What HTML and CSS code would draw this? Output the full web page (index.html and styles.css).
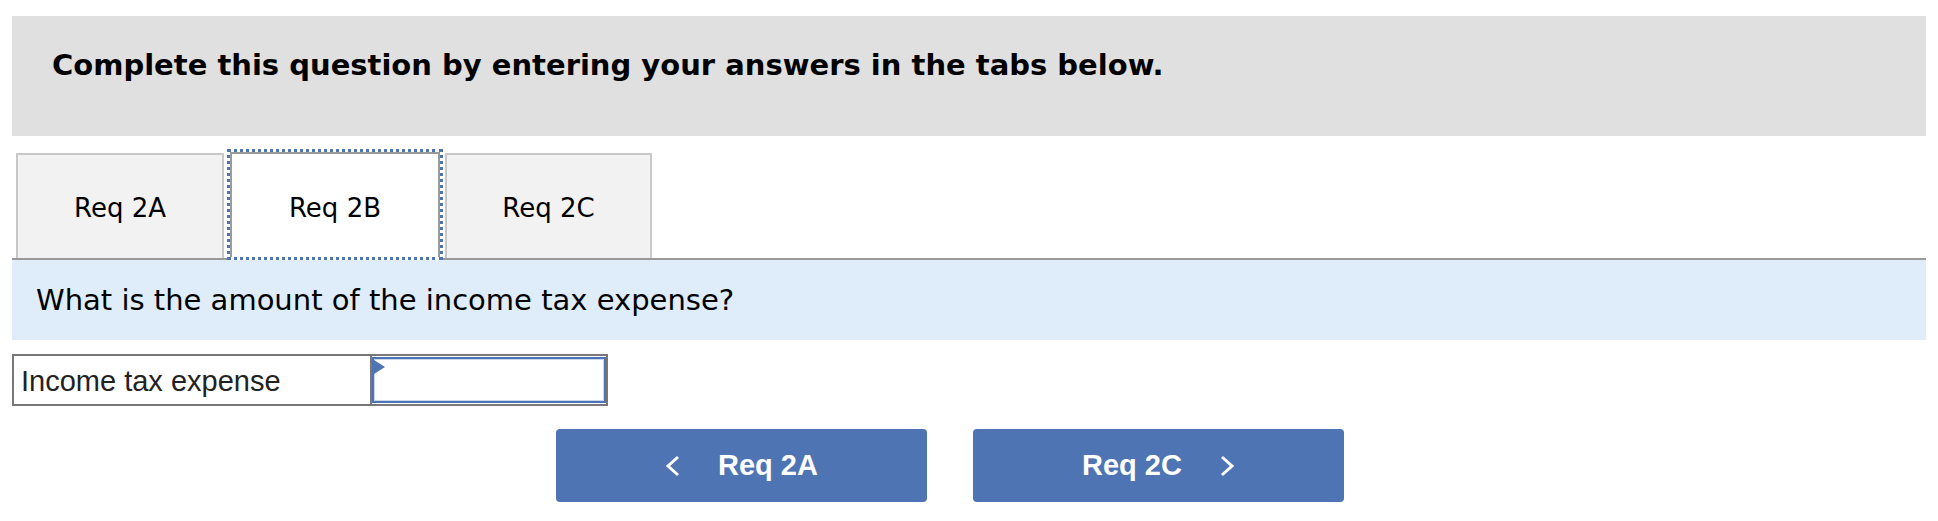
FILE: index.html
```html
<!DOCTYPE html>
<html lang="en">
<head>
<meta charset="utf-8">
<title>Req 2B</title>
<link rel="stylesheet" href="styles.css">
</head>
<body>
<div class="page">
  <div class="header">Complete this question by entering your answers in the tabs below.</div>
  <div class="tabs">
    <div class="tab tab-first">Req 2A</div>
    <div class="tab tab-active">Req 2B</div>
    <div class="tab tab-last">Req 2C</div>
  </div>
  <div class="question">What is the amount of the income tax expense?</div>
  <div class="answer-row">
    <div class="answer-label">Income tax expense</div>
    <div class="answer-cell">
      <div class="answer-input"></div>
    </div>
  </div>
  <div class="nav">
    <div class="nav-btn">
      <svg class="chev" width="15" height="22" viewBox="0 0 15 22"><polyline points="13,2 3,11 13,20" fill="none" stroke="#fff" stroke-width="3"/></svg>
      <span>Req 2A</span>
    </div>
    <div class="nav-btn">
      <span>Req 2C</span>
      <svg class="chev" width="15" height="22" viewBox="0 0 15 22"><polyline points="2,2 12,11 2,20" fill="none" stroke="#fff" stroke-width="3"/></svg>
    </div>
  </div>
</div>
</body>
</html>
```
FILE: styles.css
```css
html, body {
  margin: 0;
  padding: 0;
  background: #fff;
}
.page {
  padding: 16px 12px 0 12px;
  font-family: "DejaVu Sans", Verdana, sans-serif;
  color: #000;
}
.header {
  box-sizing: border-box;
  height: 120px;
  background: #e0e0e0;
  padding: 32px 0 0 40px;
  font-size: 29px;
  line-height: 34px;
  font-weight: bold;
}
.tabs {
  display: flex;
  align-items: flex-end;
  margin-top: 13px;
  padding-left: 4px;
  border-bottom: 2px solid #999;
}
.tab {
  box-sizing: border-box;
  display: flex;
  align-items: center;
  justify-content: center;
  font-size: 26px;
  line-height: 30px;
}
.tab-first, .tab-last {
  height: 105px;
  background: #f2f2f2;
  border: 2px solid #c8c8c8;
  border-bottom: 0;
  width: 208px;
  padding-top: 2px;
}
.tab-first {
  margin-right: 3px;
}
.tab-last {
  margin-left: 2px;
  width: 207px;
}
.tab-active {
  position: relative;
  z-index: 1;
  width: 216px;
  height: 111px;
  margin-bottom: -2px;
  background: #fff;
  border: 3px dotted #4f74b3;
  box-shadow: inset 2px 2px 0 #9a9a9a, inset -2px 0 0 #9a9a9a;
  padding-top: 6px;
}
.question {
  box-sizing: border-box;
  height: 80px;
  background: #dfecf9;
  padding: 23px 0 0 24px;
  font-size: 29px;
  line-height: 34px;
}
.answer-row {
  box-sizing: border-box;
  display: flex;
  width: 596px;
  height: 52px;
  margin-top: 14px;
  border: 2px solid #777;
}
.answer-label {
  flex: 0 0 356px;
  box-sizing: border-box;
  padding-left: 7px;
  font-family: "Liberation Sans", Arial, sans-serif;
  font-size: 29px;
  line-height: 50px;
  color: #222;
}
.answer-cell {
  flex: 1;
  display: flex;
  border-left: 2px solid #777;
}
.answer-input {
  position: relative;
  flex: 1;
  margin: 1px 0;
  border: 2px solid #4f74b3;
  box-shadow: inset 0 0 0 1px #c9d6ee;
  background: #fff;
}
.answer-input::before {
  content: "";
  position: absolute;
  left: 0;
  top: 1px;
  width: 0;
  height: 0;
  border-left: 11px solid #4f74b3;
  border-top: 7px solid transparent;
  border-bottom: 7px solid transparent;
}
.nav {
  display: flex;
  justify-content: center;
  gap: 46px;
  margin-top: 23px;
  padding-right: 38px;
}
.nav-btn {
  box-sizing: border-box;
  width: 371px;
  height: 73px;
  border-radius: 4px;
  background: #4f74b3;
  color: #fff;
  display: flex;
  align-items: center;
  justify-content: center;
  gap: 38px;
  font-family: "Liberation Sans", Arial, sans-serif;
  font-weight: bold;
  font-size: 29px;
}
.chev {
  display: block;
  flex: none;
}
```
